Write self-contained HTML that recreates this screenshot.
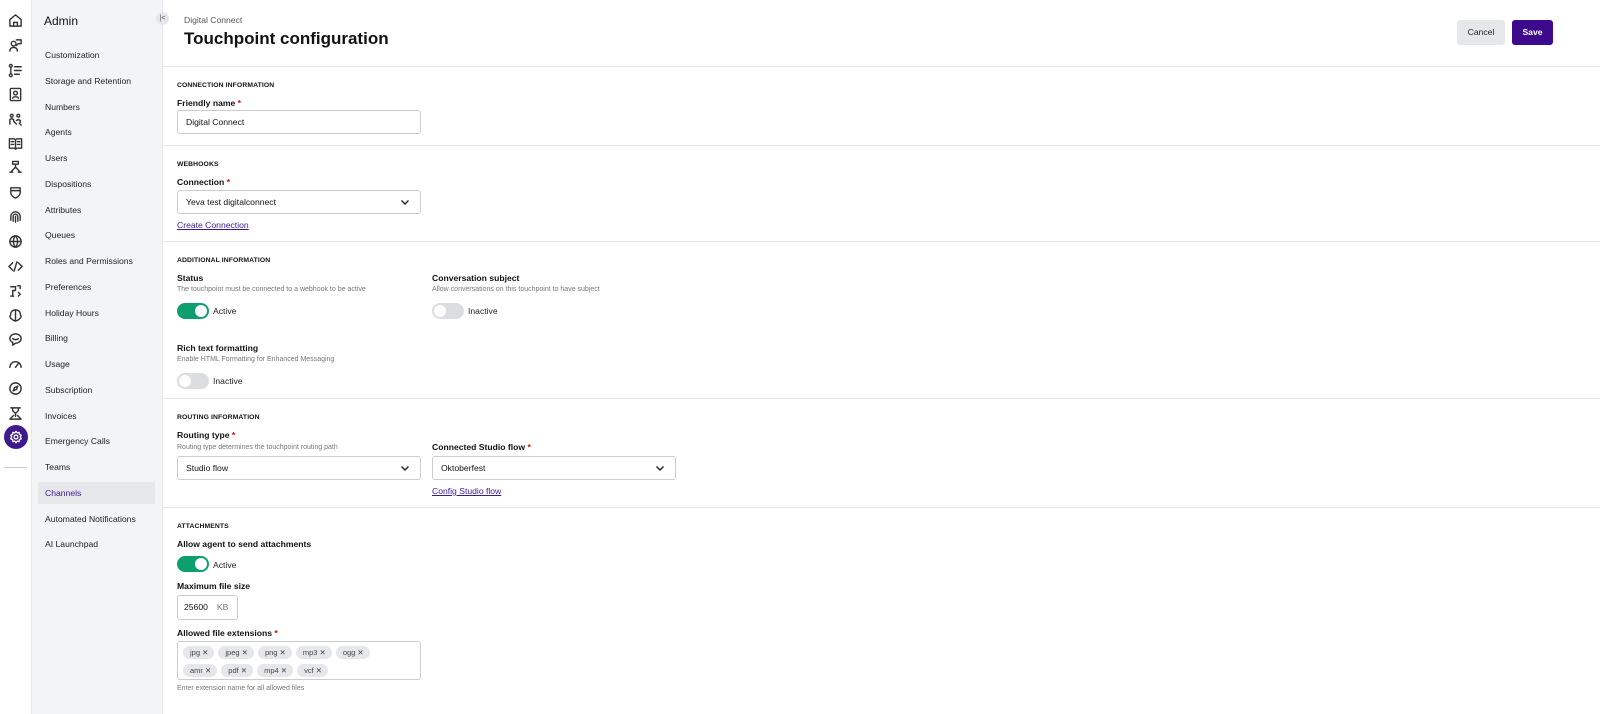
<!DOCTYPE html>
<html><head><meta charset="utf-8"><style>
*{box-sizing:border-box;margin:0;padding:0}
body{width:1600px;height:714px;overflow:hidden;background:#fff;font-family:"Liberation Sans",Arial,sans-serif;color:#111;position:relative}
.a{position:absolute;white-space:nowrap}
.rail{left:0;top:0;width:32px;height:714px;background:#fff;border-right:1px solid #e5e7eb}
.rail svg{position:absolute;left:8px;width:15px;height:15px;fill:none;stroke:#333;stroke-width:1.5;stroke-linecap:round;stroke-linejoin:round}
.side{left:32px;top:0;width:131px;height:714px;background:#f3f4f6;border-right:1px solid #e5e7eb}
.nav{position:absolute;left:13px;font-size:8.6px;color:#222}
.hr{left:163px;right:0;height:1px;background:#e5e7eb}
.sec{font-size:6.8px;font-weight:bold;color:#111;letter-spacing:.1px}
.lbl{font-size:8.6px;font-weight:bold;color:#111}
.lbl i{color:#d00;font-style:normal}
.hint{font-size:7px;color:#777}
.inp{border:1px solid #ccc;border-radius:3px;height:24px;font-size:8.6px;padding:0 8px;line-height:22px;background:#fff}
.chev{position:absolute;right:10px;top:7px}
.tog{width:32px;height:16px;border-radius:8px;background:#dcdde0}
.tog:after{content:"";position:absolute;left:2px;top:2px;width:12px;height:12px;border-radius:50%;background:#fff}
.tog.on{background:#0e9f6e}
.tog.on:after{left:18px}
.tt{font-size:8.6px;color:#222}
.link{font-size:8.6px;color:#3b1a8f;text-decoration:underline}
.row{display:flex;height:13px;margin-bottom:5px}
.chip{display:block;background:#e5e7eb;border-radius:7px;height:13px;line-height:13px;font-size:7.5px;color:#444;padding:0 6px 0 7px;margin-right:4px}
</style></head><body>
<div class="a rail">
<svg style="top:13px" viewBox="0 0 16 16"><path d="M2 7l6-5 6 5v7H2z M6 14v-4h4v4"/></svg>
<svg style="top:38px" viewBox="0 0 16 16"><circle cx="6" cy="6" r="2.5"/><path d="M2 14c0-3 2-4 4-4s4 1 4 4M9 2h5v4h-3l-2 2"/></svg>
<svg style="top:63px" viewBox="0 0 16 16"><circle cx="3" cy="3" r="1.5"/><circle cx="3" cy="13" r="1.5"/><path d="M3 4.5v7M7 4h7M7 8h7M7 12h5"/></svg>
<svg style="top:87px" viewBox="0 0 16 16"><rect x="2.5" y="1.5" width="11" height="13" rx="1"/><circle cx="8" cy="6.5" r="2"/><path d="M5 12c0-2 6-2 6 0"/></svg>
<svg style="top:112px" viewBox="0 0 16 16"><circle cx="4" cy="4" r="1.5"/><circle cx="11" cy="4" r="1.5"/><path d="M2 13V8l2-1 2 1v2l3 3M9 9l2-1 2 1v2M12 12l2 2"/></svg>
<svg style="top:136px" viewBox="0 0 16 16"><path d="M1.5 3h5l1.5 1 1.5-1h5v10h-5L8 14l-1.5-1h-5zM8 4v10M3.5 6h2.5M3.5 9h2.5M10 6h2.5M10 9h2.5"/></svg>
<svg style="top:160px" viewBox="0 0 16 16"><rect x="5" y="1.5" width="6" height="3"/><path d="M8 4.5v3M8 7.5L3 13M8 7.5l5 5.5M2 13h3M11 13h3"/></svg>
<svg style="top:185px" viewBox="0 0 16 16"><path d="M3 3h10v5c0 4-5 6-5 6S3 12 3 8z M3 6h10"/></svg>
<svg style="top:209px" viewBox="0 0 16 16"><path d="M3 12V8a5 5 0 0110 0v4M5.5 13V8a2.5 2.5 0 015 0v5M8 8v6"/></svg>
<svg style="top:234px" viewBox="0 0 16 16"><circle cx="8" cy="8" r="6"/><path d="M2 8h12M8 2c-3 3-3 9 0 12M8 2c3 3 3 9 0 12"/></svg>
<svg style="top:259px" viewBox="0 0 16 16"><path d="M5 4L1 8l4 4M11 4l4 4-4 4M9.5 3l-3 10"/></svg>
<svg style="top:283px" viewBox="0 0 16 16"><path d="M3 4h5v4H5v5M10 3h3v3M11 10l2 2-2 2M3 14h3"/></svg>
<svg style="top:308px" viewBox="0 0 16 16"><path d="M8 2v12M8 2C5 2 3 4 3 6s-1 2-1 3 2 4 6 5M8 2c3 0 5 2 5 4s1 2 1 3-2 4-6 5"/></svg>
<svg style="top:332px" viewBox="0 0 16 16"><path d="M2 7c0-3 3-5 6-5s6 2 6 5-3 5-6 5l-3 2v-3C3 10 2 9 2 7zM5 7c1 1.5 5 1.5 6 0"/></svg>
<svg style="top:357px" viewBox="0 0 16 16"><path d="M2 11a6 6 0 0112 0M8 11l3-4"/></svg>
<svg style="top:381px" viewBox="0 0 16 16"><circle cx="8" cy="8" r="6"/><path d="M10.5 5.5L9 9l-3.5 1.5L7 7z"/></svg>
<svg style="top:406px" viewBox="0 0 16 16"><path d="M3 2h10M5 2v3l3 3 3-3V2M2 14l4-4M14 14l-4-4M8 8v3M3 14h10"/></svg>
<div class="a" style="left:4px;top:425px;width:24px;height:24px;border-radius:50%;background:#3d1a8e"></div>
<svg style="top:430px;stroke:#fff;left:9px;width:14px;height:14px" viewBox="0 0 16 16"><circle cx="8" cy="8" r="2.2"/><path d="M8 1.5l1.4 1.8 2.2-.6.3 2.3 2.1 1-1 2 1 2-2.1 1-.3 2.3-2.2-.6L8 14.5l-1.4-1.8-2.2.6-.3-2.3-2.1-1 1-2-1-2 2.1-1 .3-2.3 2.2.6z"/></svg>
<div class="a" style="left:4px;top:467px;width:23px;height:1px;background:#ccc"></div>
</div>
<div class="a side">
<div class="a" style="left:12px;top:14px;font-size:12px;color:#111">Admin</div>
<div class="a" style="left:6px;top:482px;width:117px;height:22px;background:#e5e7eb;border-radius:2px"></div>
<div class="nav" style="top:50px">Customization</div>
<div class="nav" style="top:76px">Storage and Retention</div>
<div class="nav" style="top:102px">Numbers</div>
<div class="nav" style="top:127px">Agents</div>
<div class="nav" style="top:153px">Users</div>
<div class="nav" style="top:179px">Dispositions</div>
<div class="nav" style="top:205px">Attributes</div>
<div class="nav" style="top:230px">Queues</div>
<div class="nav" style="top:256px">Roles and Permissions</div>
<div class="nav" style="top:282px">Preferences</div>
<div class="nav" style="top:308px">Holiday Hours</div>
<div class="nav" style="top:333px">Billing</div>
<div class="nav" style="top:359px">Usage</div>
<div class="nav" style="top:385px">Subscription</div>
<div class="nav" style="top:411px">Invoices</div>
<div class="nav" style="top:436px">Emergency Calls</div>
<div class="nav" style="top:462px">Teams</div>
<div class="nav" style="top:488px;color:#3b1a8f">Channels</div>
<div class="nav" style="top:514px">Automated Notifications</div>
<div class="nav" style="top:539px">AI Launchpad</div>
</div>
<div class="a" style="left:156px;top:12px;width:13px;height:13px;border-radius:50%;background:#e5e7eb;font-size:7px;line-height:13px;text-align:center;color:#555">|&lt;</div>

<div class="a" style="left:184px;top:15px;font-size:8.6px;color:#555">Digital Connect</div>
<div class="a" style="left:184px;top:29px;font-size:17px;font-weight:bold;color:#111">Touchpoint configuration</div>
<div class="a" style="left:1457px;top:20px;width:48px;height:25px;background:#e5e7eb;border-radius:3px;font-size:8.6px;line-height:25px;text-align:center;color:#222">Cancel</div>
<div class="a" style="left:1512px;top:20px;width:41px;height:25px;background:#3d0a8e;border-radius:3px;font-size:8.6px;font-weight:bold;line-height:25px;text-align:center;color:#fff">Save</div>

<div class="a hr" style="top:66px"></div>
<div class="a sec" style="left:177px;top:82px">CONNECTION INFORMATION</div>
<div class="a lbl" style="left:177px;top:98px">Friendly name <i>*</i></div>
<div class="a inp" style="left:177px;top:110px;width:244px">Digital Connect</div>

<div class="a hr" style="top:145px"></div>
<div class="a sec" style="left:177px;top:161px">WEBHOOKS</div>
<div class="a lbl" style="left:177px;top:177px">Connection <i>*</i></div>
<div class="a inp" style="left:177px;top:190px;width:244px">Yeva test digitalconnect<svg class="chev" width="10" height="8" viewBox="0 0 10 8"><path d="M1.5 2.5L5 6l3.5-3.5" fill="none" stroke="#222" stroke-width="1.4"/></svg></div>
<div class="a link" style="left:177px;top:220px">Create Connection</div>

<div class="a hr" style="top:241px"></div>
<div class="a sec" style="left:177px;top:257px">ADDITIONAL INFORMATION</div>
<div class="a lbl" style="left:177px;top:273px">Status</div>
<div class="a hint" style="left:177px;top:286px">The touchpoint must be connected to a webhook to be active</div>
<div class="a tog on" style="left:177px;top:303px"></div>
<div class="a tt" style="left:213px;top:306px">Active</div>
<div class="a lbl" style="left:432px;top:273px">Conversation subject</div>
<div class="a hint" style="left:432px;top:286px">Allow conversations on this touchpoint to have subject</div>
<div class="a tog" style="left:432px;top:303px"></div>
<div class="a tt" style="left:468px;top:306px">Inactive</div>
<div class="a lbl" style="left:177px;top:343px">Rich text formatting</div>
<div class="a hint" style="left:177px;top:356px">Enable HTML Formatting for Enhanced Messaging</div>
<div class="a tog" style="left:177px;top:373px"></div>
<div class="a tt" style="left:213px;top:376px">Inactive</div>

<div class="a hr" style="top:398px"></div>
<div class="a sec" style="left:177px;top:414px">ROUTING INFORMATION</div>
<div class="a lbl" style="left:177px;top:430px">Routing type <i>*</i></div>
<div class="a hint" style="left:177px;top:444px">Routing type determines the touchpoint routing path</div>
<div class="a inp" style="left:177px;top:456px;width:244px">Studio flow<svg class="chev" width="10" height="8" viewBox="0 0 10 8"><path d="M1.5 2.5L5 6l3.5-3.5" fill="none" stroke="#222" stroke-width="1.4"/></svg></div>
<div class="a lbl" style="left:432px;top:442px">Connected Studio flow <i>*</i></div>
<div class="a inp" style="left:432px;top:456px;width:244px">Oktoberfest<svg class="chev" width="10" height="8" viewBox="0 0 10 8"><path d="M1.5 2.5L5 6l3.5-3.5" fill="none" stroke="#222" stroke-width="1.4"/></svg></div>
<div class="a link" style="left:432px;top:486px">Config Studio flow</div>

<div class="a hr" style="top:507px"></div>
<div class="a sec" style="left:177px;top:523px">ATTACHMENTS</div>
<div class="a lbl" style="left:177px;top:539px">Allow agent to send attachments</div>
<div class="a tog on" style="left:177px;top:556px"></div>
<div class="a tt" style="left:213px;top:560px">Active</div>
<div class="a lbl" style="left:177px;top:581px">Maximum file size</div>
<div class="a inp" style="left:177px;top:595px;width:61px;height:25px;line-height:23px;padding:0 6px">25600<span style="color:#777;margin-left:9px">KB</span></div>
<div class="a lbl" style="left:177px;top:628px">Allowed file extensions <i>*</i></div>
<div class="a" style="left:177px;top:641px;width:244px;height:39px;border:1px solid #ccc;border-radius:3px;padding:4px 0 0 5px">
<div class="row"><span class="chip">jpg ✕</span><span class="chip">jpeg ✕</span><span class="chip">png ✕</span><span class="chip">mp3 ✕</span><span class="chip">ogg ✕</span></div>
<div class="row"><span class="chip">amr ✕</span><span class="chip">pdf ✕</span><span class="chip">mp4 ✕</span><span class="chip">vcf ✕</span></div>
</div>
<div class="a hint" style="left:177px;top:685px">Enter extension name for all allowed files</div>
</body></html>
